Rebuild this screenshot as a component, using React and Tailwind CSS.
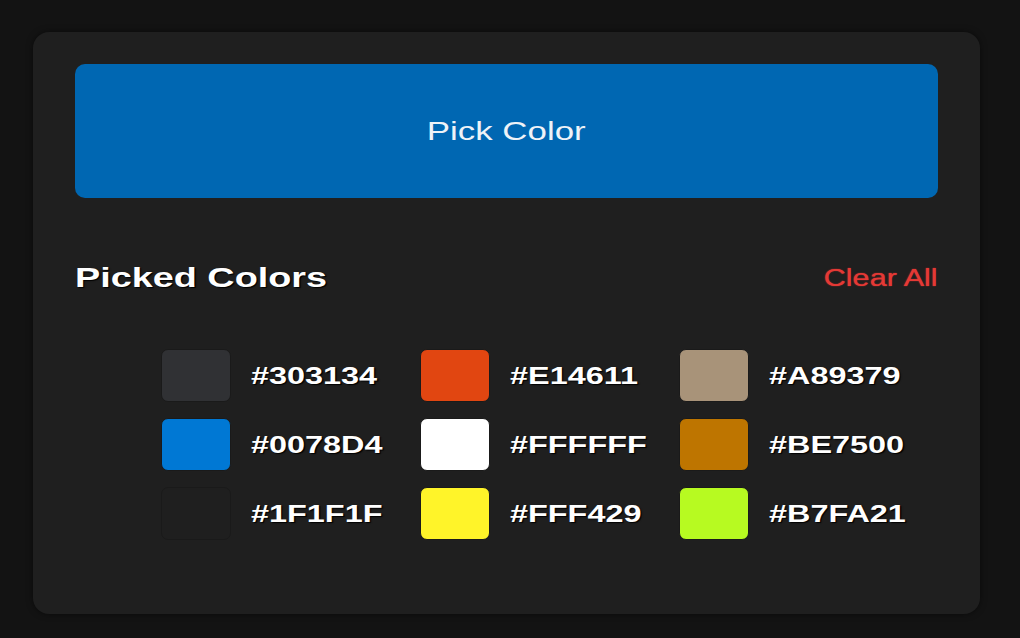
import React from "react";

const colors = [
  "#303134",
  "#E14611",
  "#A89379",
  "#0078D4",
  "#FFFFFF",
  "#BE7500",
  "#1F1F1F",
  "#FFF429",
  "#B7FA21",
];

const Swatch = ({ hex }) => (
  <div className="flex items-center gap-[20px] h-[53px]">
    <div
      className="w-[70px] h-[53px] rounded-[7px] border border-[#1a1a1a]"
      style={{ backgroundColor: hex }}
    />
    <span className="text-[24px] font-bold text-white origin-left scale-x-[1.35] [text-shadow:1px_1px_1px_#000]">
      {hex}
    </span>
  </div>
);

export default function App() {
  return (
    <div
      className="w-[1020px] h-[638px] bg-[#131313] pt-[32px] pl-[33px]"
      style={{ fontFamily: '"Liberation Sans", Arial, sans-serif' }}
    >
      <div className="w-[947px] h-[582px] rounded-[16px] bg-[#1f1f1f] px-[42px] pt-[32px] shadow-[0_0_6px_rgba(0,0,0,0.5)]">
        <button className="w-full h-[134px] rounded-[10px] bg-[#0067b2] flex items-center justify-center">
          <span className="text-[26px] text-[#eef3f8] scale-x-[1.34]">
            Pick Color
          </span>
        </button>

        <div className="flex items-center justify-between mt-[64px] h-[32px]">
          <h2 className="text-[28px] font-bold text-white origin-left scale-x-[1.35] [text-shadow:1px_1px_1px_#000]">
            Picked Colors
          </h2>
          <span className="text-[23px] text-[#e53935] origin-right scale-x-[1.33] [text-shadow:0_0_1px_#e53935]">
            Clear All
          </span>
        </div>

        <div className="grid grid-cols-[repeat(3,259px)] gap-y-[16px] mt-[55px] pl-[86px]">
          {colors.map((c) => (
            <Swatch key={c} hex={c} />
          ))}
        </div>
      </div>
    </div>
  );
}
